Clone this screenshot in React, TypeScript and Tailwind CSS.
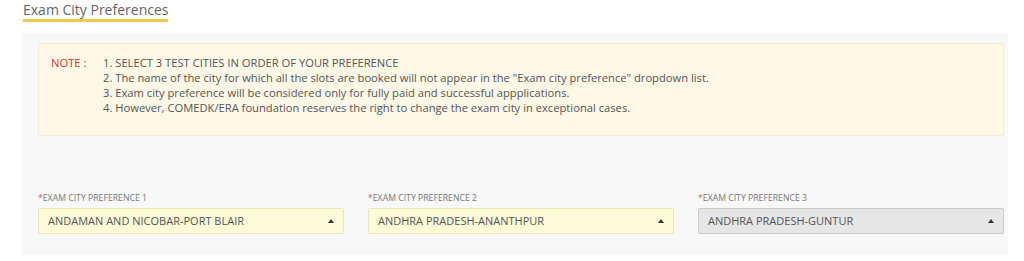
import React from 'react';

interface CityPref {
  label: string;
  value: string;
  disabled?: boolean;
}

const prefs: CityPref[] = [
  { label: 'EXAM CITY PREFERENCE 1', value: 'ANDAMAN AND NICOBAR-PORT BLAIR' },
  { label: 'EXAM CITY PREFERENCE 2', value: 'ANDHRA PRADESH-ANANTHPUR' },
  { label: 'EXAM CITY PREFERENCE 3', value: 'ANDHRA PRADESH-GUNTUR', disabled: true },
];

const notes = [
  '1. SELECT 3 TEST CITIES IN ORDER OF YOUR PREFERENCE',
  '2. The name of the city for which all the slots are booked will not appear in the "Exam city preference" dropdown list.',
  '3. Exam city preference will be considered only for fully paid and successful appplications.',
  '4. However, COMEDK/ERA foundation reserves the right to change the exam city in exceptional cases.',
];

const SelectBox: React.FC<{ pref: CityPref }> = ({ pref }) => (
  <div className="flex flex-col">
    <label className="text-[8.7px] leading-[12px] text-[#777] mb-[4px]">
      <span className="text-[#e05050]">*</span>
      {pref.label}
    </label>
    <div
      className={`flex items-center justify-between h-[26px] pl-[9px] pr-[9px] rounded-[2px] border ${
        pref.disabled ? 'bg-[#e6e6e6] border-[#c9c9c9]' : 'bg-[#fffbd8] border-[#ebe5b8]'
      }`}
    >
      <span className="text-[11px] text-[#555]">{pref.value}</span>
      <svg width="6" height="4" viewBox="0 0 6 4" className="fill-[#333]">
        <path d="M3 0 L6 4 L0 4 Z" />
      </svg>
    </div>
  </div>
);

export default function App() {
  return (
    <div
      className="w-[1024px] h-[261px] bg-white overflow-hidden"
      style={{ fontFamily: '"Open Sans", "Noto Sans", Arial, sans-serif' }}
    >
      <div className="pl-[23px] pt-[3px]">
        <div className="w-fit border-b-[3px] border-[#f2c94c] pb-[2px]">
          <h2 className="text-[14px] leading-[14px] text-[#666]">Exam City Preferences</h2>
        </div>
      </div>

      {/* Panel */}
      <div className="ml-[22px] mr-[16px] mt-[11px] bg-[#f8f8f8] pl-[16px] pr-[4px] pt-[10px] pb-[21px]">
        {/* Note box */}
        <div className="grid grid-cols-[52px_1fr] bg-[#fff8e7] border border-[#f5ecd6] h-[93px] pl-[12px] pt-[11px]">
          <div className="text-[11.2px] leading-[15px] text-[#d03535]">NOTE :</div>
          <div className="text-[11.2px] leading-[15px] text-[#555]">
            {notes.map((n, i) => (
              <div key={i}>{n}</div>
            ))}
          </div>
        </div>

        {/* Selects */}
        <div className="grid grid-cols-3 gap-x-[24px] mt-[56px]">
          {prefs.map((p, i) => (
            <SelectBox key={i} pref={p} />
          ))}
        </div>
      </div>
    </div>
  );
}
